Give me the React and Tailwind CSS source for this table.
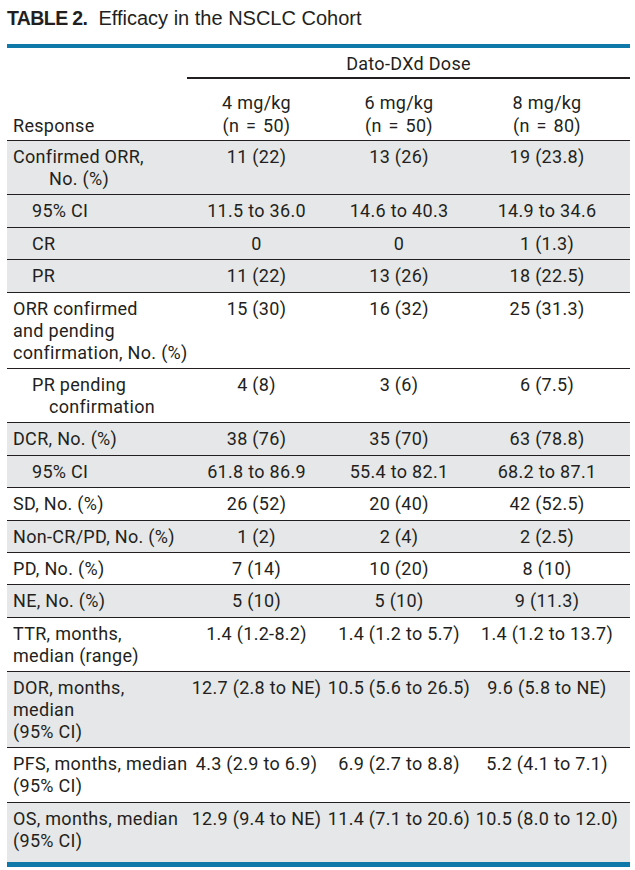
import React from 'react';

const rows = [
  { label: [['Confirmed ORR,', 0], ['No. (%)', 36]], indent: 0, vals: ['11 (22)', '13 (26)', '19 (23.8)'], shade: true },
  { label: [['95% CI', 0]], indent: 19, vals: ['11.5 to 36.0', '14.6 to 40.3', '14.9 to 34.6'], shade: true },
  { label: [['CR', 0]], indent: 19, vals: ['0', '0', '1 (1.3)'], shade: true },
  { label: [['PR', 0]], indent: 19, vals: ['11 (22)', '13 (26)', '18 (22.5)'], shade: true },
  { label: [['ORR confirmed', 0], ['and pending', 0], ['confirmation, No. (%)', 0]], indent: 0, vals: ['15 (30)', '16 (32)', '25 (31.3)'], shade: false },
  { label: [['PR pending', 0], ['confirmation', 17]], indent: 19, vals: ['4 (8)', '3 (6)', '6 (7.5)'], shade: false },
  { label: [['DCR, No. (%)', 0]], indent: 0, vals: ['38 (76)', '35 (70)', '63 (78.8)'], shade: true },
  { label: [['95% CI', 0]], indent: 19, vals: ['61.8 to 86.9', '55.4 to 82.1', '68.2 to 87.1'], shade: true },
  { label: [['SD, No. (%)', 0]], indent: 0, vals: ['26 (52)', '20 (40)', '42 (52.5)'], shade: false },
  { label: [['Non-CR/PD, No. (%)', 0]], indent: 0, vals: ['1 (2)', '2 (4)', '2 (2.5)'], shade: true },
  { label: [['PD, No. (%)', 0]], indent: 0, vals: ['7 (14)', '10 (20)', '8 (10)'], shade: false },
  { label: [['NE, No. (%)', 0]], indent: 0, vals: ['5 (10)', '5 (10)', '9 (11.3)'], shade: true },
  { label: [['TTR, months,', 0], ['median (range)', 0]], indent: 0, vals: ['1.4 (1.2-8.2)', '1.4 (1.2 to 5.7)', '1.4 (1.2 to 13.7)'], shade: false },
  { label: [['DOR, months,', 0], ['median', 0], ['(95% CI)', 0]], indent: 0, vals: ['12.7 (2.8 to NE)', '10.5 (5.6 to 26.5)', '9.6 (5.8 to NE)'], shade: true },
  { label: [['PFS, months, median', 0], ['(95% CI)', 0]], indent: 0, vals: ['4.3 (2.9 to 6.9)', '6.9 (2.7 to 8.8)', '5.2 (4.1 to 7.1)'], shade: false },
  { label: [['OS, months, median', 0], ['(95% CI)', 0]], indent: 0, vals: ['12.9 (9.4 to NE)', '11.4 (7.1 to 20.6)', '10.5 (8.0 to 12.0)'], shade: true, last: true },
];

const cols = 'grid grid-cols-[180px_139px_146px_158px]';

const N = ({ n }) => (
  <>
    (n <span className="mx-[2px]">=</span> {n})
  </>
);

export default function App() {
  return (
    <div className="w-[635px] h-[870px] bg-white text-[#231f20]">
      <div className="pl-[7px] pt-[5px] leading-[26px] whitespace-nowrap" style={{ fontFamily: '"Liberation Sans", Arial, sans-serif' }}>
        <span className="font-bold text-[19.5px] tracking-[-0.6px]">TABLE 2.</span>
        <span className="ml-[11px] text-[20px]">Efficacy in the NSCLC Cohort</span>
      </div>

      <div
        className="mx-[7px] mt-[11px] w-[623px] border-t-[4px] border-b-[5px] border-[#0f7aa9] text-[18px] tracking-[0.3px]"
        style={{ fontFamily: 'Roboto, "Open Sans", sans-serif' }}
      >
        {/* header */}
        <div className={cols}>
          <div />
          <div className="col-span-3 border-b-2 border-[#231f20] pt-[5px] pb-[2px] leading-[22px] text-center">Dato-DXd Dose</div>
        </div>
        <div className={`${cols} border-b border-[#231f20] leading-[23px] pt-[12px] pb-[3px]`}>
          <div className="pl-[6px] flex items-end">Response</div>
          <div className="text-center">4 mg/kg<br /><N n="50" /></div>
          <div className="text-center">6 mg/kg<br /><N n="50" /></div>
          <div className="text-center pr-[8px]">8 mg/kg<br /><N n="80" /></div>
        </div>

        {/* body */}
        {rows.map((r, i) => (
          <div
            key={i}
            className={`${cols} leading-[22px] pt-[5px] whitespace-nowrap ${r.shade ? 'bg-[#e6e7e8]' : 'bg-white'} ${r.last ? 'pb-[10px]' : 'pb-[4.4px] border-b border-[#231f20]'}`}
          >
            <div style={{ paddingLeft: 6 + r.indent }}>
              {r.label.map(([t, pad], j) => (
                <div key={j} style={{ paddingLeft: pad }}>{t}</div>
              ))}
            </div>
            <div className="text-center">{r.vals[0]}</div>
            <div className="text-center">{r.vals[1]}</div>
            <div className="text-center pr-[8px]">{r.vals[2]}</div>
          </div>
        ))}
      </div>
    </div>
  );
}
